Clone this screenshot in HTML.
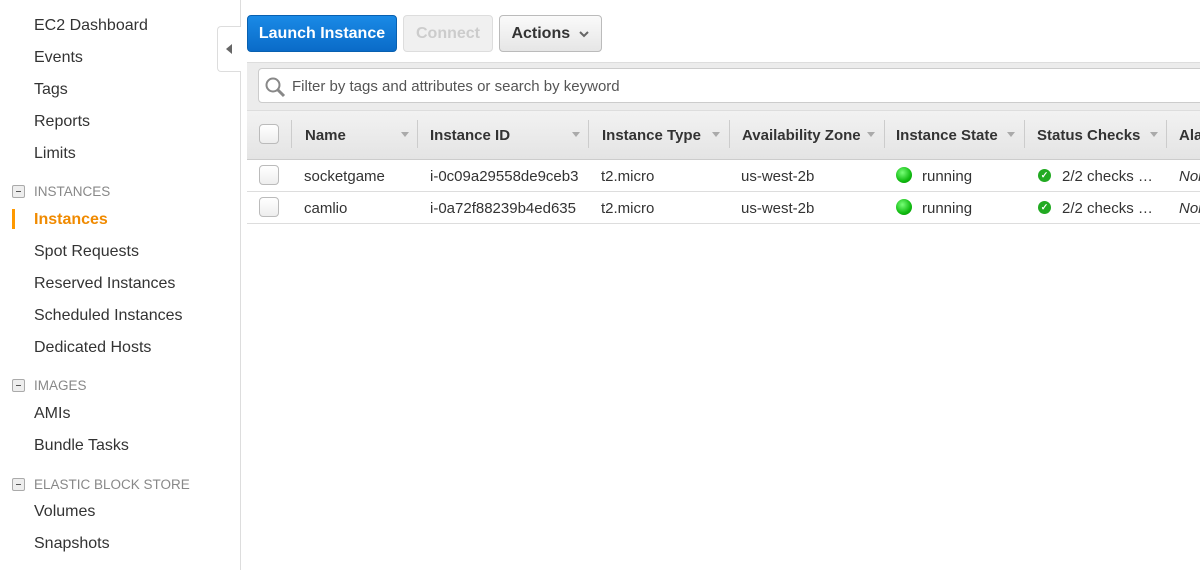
<!DOCTYPE html><html><head><style>
body{margin:0;width:1200px;height:570px;overflow:hidden;background:#fff;font-family:"Liberation Sans",Arial,sans-serif;position:relative;color:#222}
.a{position:absolute}
.nav{left:34px;font-size:16px;color:#333;margin-top:1px}
.sec{left:34px;font-size:13.5px;color:#888;margin-top:1px}
.box{left:12px;width:11px;height:11px;border:1px solid #aaa;border-radius:2px;background:#eee}
.box:after{content:"";position:absolute;left:3px;top:5px;width:5px;height:1px;background:#555}
.btn{top:15px;height:37px;border-radius:4px;font-size:16px;font-weight:bold;box-sizing:border-box;display:flex;align-items:center;justify-content:center}
.th{top:127px;font-size:15px;font-weight:bold;color:#333}
.arr{top:132px;width:0;height:0;border-left:4px solid transparent;border-right:4px solid transparent;border-top:5px solid #aaa}
.div{top:120px;width:1px;height:28px;background:#ccc}
.td{font-size:15px;color:#333;margin-top:1px}
.cb{left:259px;width:20px;height:20px;border:1px solid #bbb;border-radius:4px;background:linear-gradient(#fff,#eee);box-sizing:border-box}
.dot{width:16px;height:16px;border-radius:50%;background:radial-gradient(circle at 40% 35%,#7f7,#1b1 60%,#080)}
.chk{width:13px;height:13px;border-radius:50%;background:#2a2;color:#fff;font-size:9px;line-height:13px;text-align:center;font-weight:bold}
</style></head><body>
<div class="a" style="left:240px;top:0;width:1px;height:570px;background:#ddd"></div>
<div class="a nav" style="top:16px">EC2 Dashboard</div>
<div class="a nav" style="top:48px">Events</div>
<div class="a nav" style="top:80px">Tags</div>
<div class="a nav" style="top:112px">Reports</div>
<div class="a nav" style="top:144px">Limits</div>
<div class="a box" style="top:185px"></div><div class="a sec" style="top:183px">INSTANCES</div>
<div class="a" style="left:12px;top:209px;width:3px;height:20px;background:#f90"></div>
<div class="a nav" style="top:210px;color:#f08a00;font-weight:bold">Instances</div>
<div class="a nav" style="top:242px">Spot Requests</div>
<div class="a nav" style="top:274px">Reserved Instances</div>
<div class="a nav" style="top:306px">Scheduled Instances</div>
<div class="a nav" style="top:338px">Dedicated Hosts</div>
<div class="a box" style="top:379px"></div><div class="a sec" style="top:377px">IMAGES</div>
<div class="a nav" style="top:404px">AMIs</div>
<div class="a nav" style="top:436px">Bundle Tasks</div>
<div class="a box" style="top:478px"></div><div class="a sec" style="top:476px">ELASTIC BLOCK STORE</div>
<div class="a nav" style="top:502px">Volumes</div>
<div class="a nav" style="top:534px">Snapshots</div>
<div class="a" style="left:217px;top:26px;width:24px;height:46px;border:1px solid #ddd;border-right:none;background:#fff;border-radius:4px 0 0 4px;box-sizing:border-box"></div>
<div class="a" style="left:226px;top:44px;width:0;height:0;border-top:5px solid transparent;border-bottom:5px solid transparent;border-right:6px solid #666"></div>
<div class="a btn" style="left:247px;width:150px;background:linear-gradient(#1a8ae6,#0a6bc8);border:1px solid #0860b0;color:#fff">Launch Instance</div>
<div class="a btn" style="left:403px;width:90px;background:#f0f0f0;border:1px solid #ddd;color:#ccc">Connect</div>
<div class="a btn" style="left:499px;width:103px;background:linear-gradient(#fafafa,#e6e6e6);border:1px solid #bbb;color:#333">Actions&nbsp;<svg width="12" height="8" style="margin-left:3px"><path d="M2 2 L6 6 L10 2" fill="none" stroke="#666" stroke-width="2"/></svg></div>
<div class="a" style="left:247px;top:62px;width:953px;height:97px;background:#ececec;border-top:1px solid #ddd"></div>
<div class="a" style="left:258px;top:68px;width:950px;height:35px;background:#fff;border:1px solid #ccc;border-radius:4px;box-sizing:border-box"></div>
<svg class="a" style="left:264px;top:76px" width="22" height="22"><circle cx="9" cy="9" r="6.5" fill="none" stroke="#888" stroke-width="2"/><line x1="14" y1="14" x2="20" y2="20" stroke="#888" stroke-width="3"/></svg>
<div class="a" style="left:292px;top:78px;font-size:15px;color:#555">Filter by tags and attributes or search by keyword</div>
<div class="a" style="left:247px;top:110px;width:953px;height:48px;background:linear-gradient(#f2f2f2,#e4e4e4);border-top:1px solid #ddd;border-bottom:1px solid #ccc"></div>
<div class="a cb" style="top:124px"></div>
<div class="a div" style="left:291px"></div><div class="a th" style="left:305px">Name</div><div class="a arr" style="left:401px"></div>
<div class="a div" style="left:417px"></div><div class="a th" style="left:430px">Instance ID</div><div class="a arr" style="left:572px"></div>
<div class="a div" style="left:588px"></div><div class="a th" style="left:602px">Instance Type</div><div class="a arr" style="left:712px"></div>
<div class="a div" style="left:729px"></div><div class="a th" style="left:742px">Availability Zone</div><div class="a arr" style="left:867px"></div>
<div class="a div" style="left:884px"></div><div class="a th" style="left:896px">Instance State</div><div class="a arr" style="left:1007px"></div>
<div class="a div" style="left:1024px"></div><div class="a th" style="left:1037px">Status Checks</div><div class="a arr" style="left:1150px"></div>
<div class="a div" style="left:1166px"></div><div class="a th" style="left:1179px">Alarm</div>
<div class="a" style="left:247px;top:191px;width:953px;height:1px;background:#ddd"></div>
<div class="a" style="left:247px;top:223px;width:953px;height:1px;background:#ddd"></div>
<div class="a cb" style="top:165px"></div>
<div class="a td" style="left:304px;top:167px">socketgame</div><div class="a td" style="left:430px;top:167px">i-0c09a29558de9ceb3</div><div class="a td" style="left:601px;top:167px">t2.micro</div><div class="a td" style="left:741px;top:167px">us-west-2b</div>
<div class="a dot" style="left:896px;top:167px"></div><div class="a td" style="left:922px;top:167px">running</div>
<div class="a chk" style="left:1038px;top:169px">✓</div><div class="a td" style="left:1062px;top:167px">2/2 checks …</div><div class="a td" style="left:1179px;top:167px;font-style:italic">None</div>
<div class="a cb" style="top:197px"></div>
<div class="a td" style="left:304px;top:199px">camlio</div><div class="a td" style="left:430px;top:199px">i-0a72f88239b4ed635</div><div class="a td" style="left:601px;top:199px">t2.micro</div><div class="a td" style="left:741px;top:199px">us-west-2b</div>
<div class="a dot" style="left:896px;top:199px"></div><div class="a td" style="left:922px;top:199px">running</div>
<div class="a chk" style="left:1038px;top:201px">✓</div><div class="a td" style="left:1062px;top:199px">2/2 checks …</div><div class="a td" style="left:1179px;top:199px;font-style:italic">None</div>
</body></html>
